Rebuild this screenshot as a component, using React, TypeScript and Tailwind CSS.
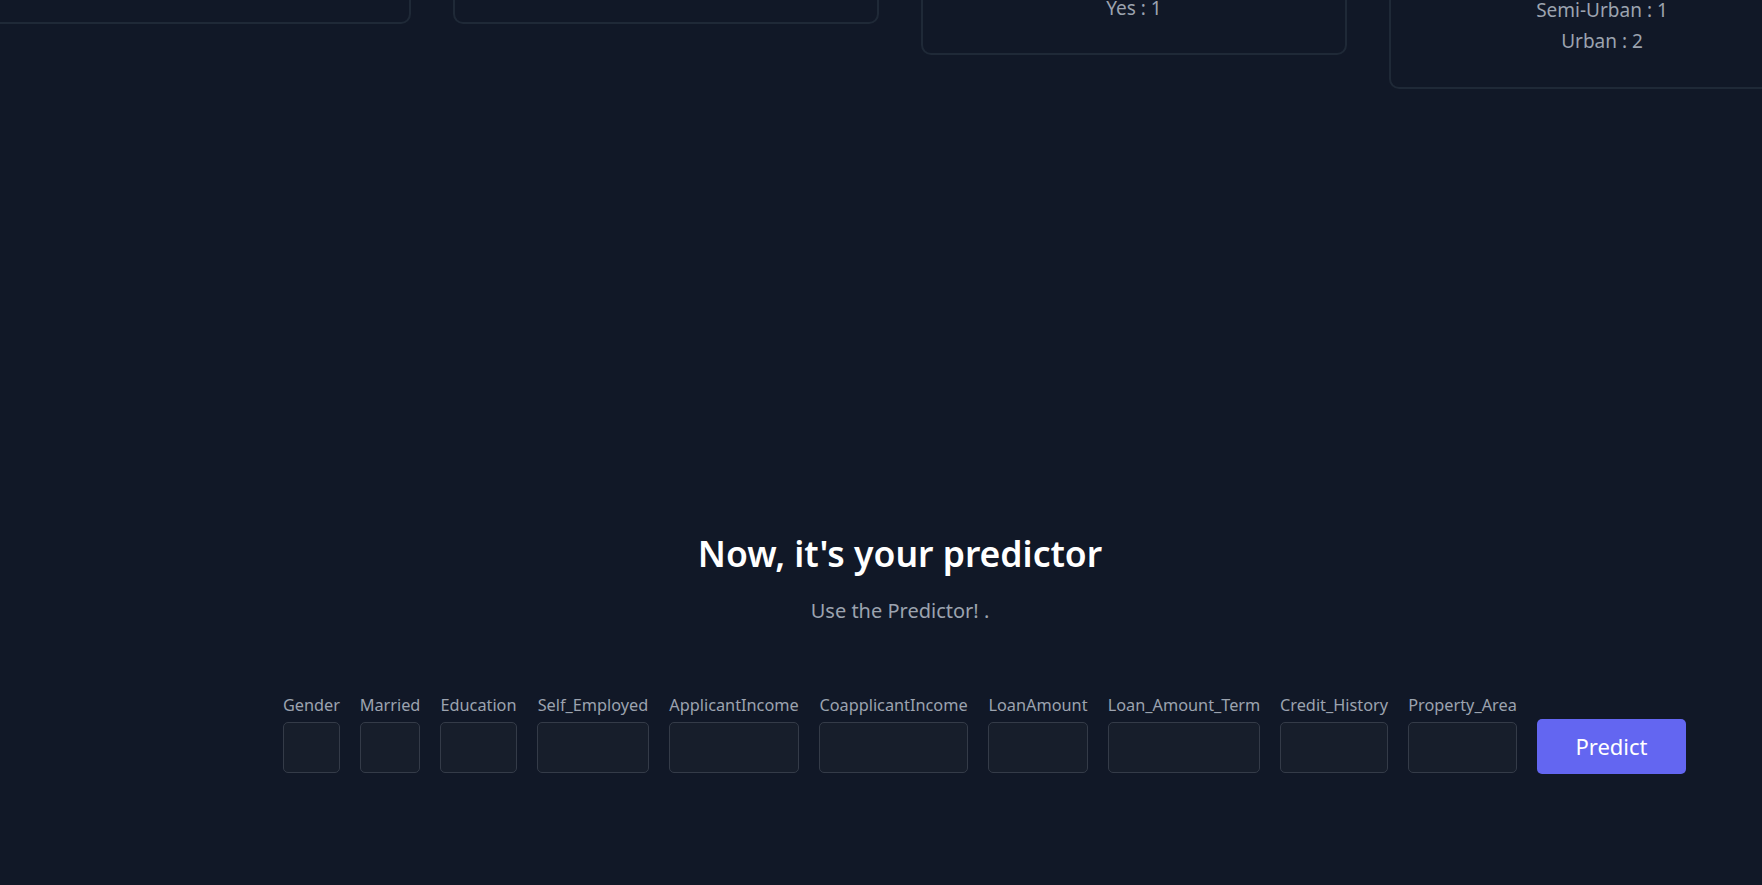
import React from 'react';

const fields = [
  { name: 'Gender', w: 'w-[57px]' },
  { name: 'Married', w: 'w-[60px]' },
  { name: 'Education', w: 'w-[77px]' },
  { name: 'Self_Employed', w: 'w-[112px]' },
  { name: 'ApplicantIncome', w: 'w-[130px]' },
  { name: 'CoapplicantIncome', w: 'w-[149px]' },
  { name: 'LoanAmount', w: 'w-[100px]' },
  { name: 'Loan_Amount_Term', w: 'w-[152px]' },
  { name: 'Credit_History', w: 'w-[108px]' },
  { name: 'Property_Area', w: 'w-[109px]' },
];

function StatCard({ lines, h, pb }: { lines: string[]; h: string; pb: string }) {
  return (
    <div className={`w-[426px] shrink-0 ${h} ${pb} flex flex-col items-center justify-end rounded-[10px] border-2 border-[#1f2937]`}>
      {lines.map((l) => (
        <p key={l} className="text-[19px] leading-[31px] text-[#9ca3af]">{l}</p>
      ))}
    </div>
  );
}

export default function App() {
  return (
    <div className="min-h-screen w-full overflow-hidden bg-[#111827] font-['Noto_Sans','Liberation_Sans',sans-serif]">
      {/* cartes du haut (coupées par le scroll) */}
      <div className="-mt-[118px] -ml-[15px] flex items-start gap-[42px]">
        <StatCard lines={[]} h="h-[142px]" pb="pb-[28px]" />
        <StatCard lines={[]} h="h-[142px]" pb="pb-[28px]" />
        <StatCard lines={['No : 0', 'Yes : 1']} h="h-[173px]" pb="pb-[29px]" />
        <StatCard lines={['Rural : 0', 'Semi-Urban : 1', 'Urban : 2']} h="h-[207px]" pb="pb-[30px]" />
      </div>

      <section className="mt-[441px] pl-[38px] text-center">
        <h2 className="text-[35.5px] font-semibold leading-[46px] text-white">Now, it's your predictor</h2>
        <p className="mt-[21px] text-[20px] leading-[28px] text-[#9ca3af]">Use the Predictor! .</p>
      </section>

      <form className="mt-[68px] flex items-end gap-5 pl-[283px]" onSubmit={(e) => e.preventDefault()}>
        {fields.map((f) => (
          <label key={f.name} className={`flex ${f.w} flex-col items-center`}>
            <span className="whitespace-nowrap text-[16.3px] leading-[24px] text-[#9ca3af]">{f.name}</span>
            <input
              name={f.name}
              className="mt-[5px] h-[51px] w-full rounded-[5px] border border-[#343b48] bg-[#171e2b] px-2 text-white outline-none"
            />
          </label>
        ))}
        <button
          type="submit"
          className="mb-[-1px] h-[55px] w-[149px] rounded-[5px] bg-[#6366f1] text-[22px] text-white"
        >
          Predict
        </button>
      </form>
    </div>
  );
}
